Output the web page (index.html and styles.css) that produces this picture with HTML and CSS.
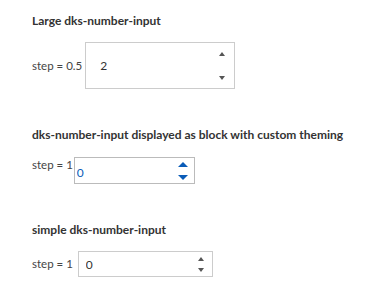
FILE: index.html
```html
<html>
   <head>
      <title>dks-number-input</title>
      <link rel="stylesheet" href="styles.css">
   </head>
   <body>
      <div class="demo">
         <h3>Large dks-number-input</h3>
         <div class="row">
            <span class="label">step = 0.5</span>
            <div class="number-input large">
               <input type="text" value="2" />
               <div class="spin">
                  <span class="arrow up"></span>
                  <span class="arrow down"></span>
               </div>
            </div>
         </div>
      </div>
      <div class="demo">
         <h3>dks-number-input displayed as block with custom theming</h3>
         <div class="row top">
            <span class="label">step = 1</span>
            <div class="number-input themed">
               <input type="text" value="0" />
               <div class="spin">
                  <span class="arrow up"></span>
                  <span class="arrow down"></span>
               </div>
            </div>
         </div>
      </div>
      <div class="demo">
         <h3>simple dks-number-input</h3>
         <div class="row">
            <span class="label">step = 1</span>
            <div class="number-input simple">
               <input type="text" value="0" />
               <div class="spin">
                  <span class="arrow up"></span>
                  <span class="arrow down"></span>
               </div>
            </div>
         </div>
      </div>
   </body>
</html>
```
FILE: styles.css
```css
body {
   margin: 0;
   padding: 13px 8px 0 32px;
   font-size: 12px;
   font-family: Lato, "Open Sans", sans-serif;
   color: #333;
   background: #fff;
}
h3 {
   margin: 0;
   font-size: 12px;
   font-weight: 700;
   color: #333;
   line-height: 16px;
   white-space: nowrap;
}
.demo {
   margin-bottom: 38px;
}
.demo:last-child {
   margin-bottom: 0;
}
.row {
   display: flex;
   align-items: center;
   margin-top: 13px;
}
.row.top {
   align-items: flex-start;
   margin-top: 14px;
}
.label {
   color: #444;
   font-size: 11.5px;
   line-height: 16px;
}
.number-input {
   display: flex;
   border: 1px solid #ccc;
   background: #fff;
}
.number-input input {
   border: none;
   outline: none;
   padding: 0;
   font: inherit;
   color: #333;
   flex: 1;
   min-width: 0;
   background: transparent;
}
.spin {
   display: flex;
   flex-direction: column;
   justify-content: space-between;
   align-items: center;
}
.arrow {
   width: 0;
   height: 0;
   border-left: 3.5px solid transparent;
   border-right: 3.5px solid transparent;
}
.arrow.up {
   border-bottom: 4px solid #555;
}
.arrow.down {
   border-top: 4px solid #555;
}

.large {
   margin-left: 3px;
   width: 148px;
   height: 45px;
}
.large input {
   padding-left: 14px;
}
.large .spin {
   padding: 9px 9px 8px 0;
}

.themed {
   margin-left: 1px;
   width: 119px;
   height: 25px;
   border-color: #bbb;
}
.themed input {
   padding: 4px 0 0 2px;
   color: #0a5cb8;
}
.themed .spin {
   padding: 4px 6px 3px 0;
}
.themed .arrow {
   border-left-width: 5px;
   border-right-width: 5px;
}
.themed .arrow.up {
   border-bottom: 5px solid #0a5cb8;
}
.themed .arrow.down {
   border-top: 5px solid #0a5cb8;
}

.simple {
   margin-left: 5px;
   width: 133px;
   height: 24px;
}
.simple input {
   padding-left: 7px;
}
.simple .spin {
   padding: 5px 8px 4px 0;
}
```
